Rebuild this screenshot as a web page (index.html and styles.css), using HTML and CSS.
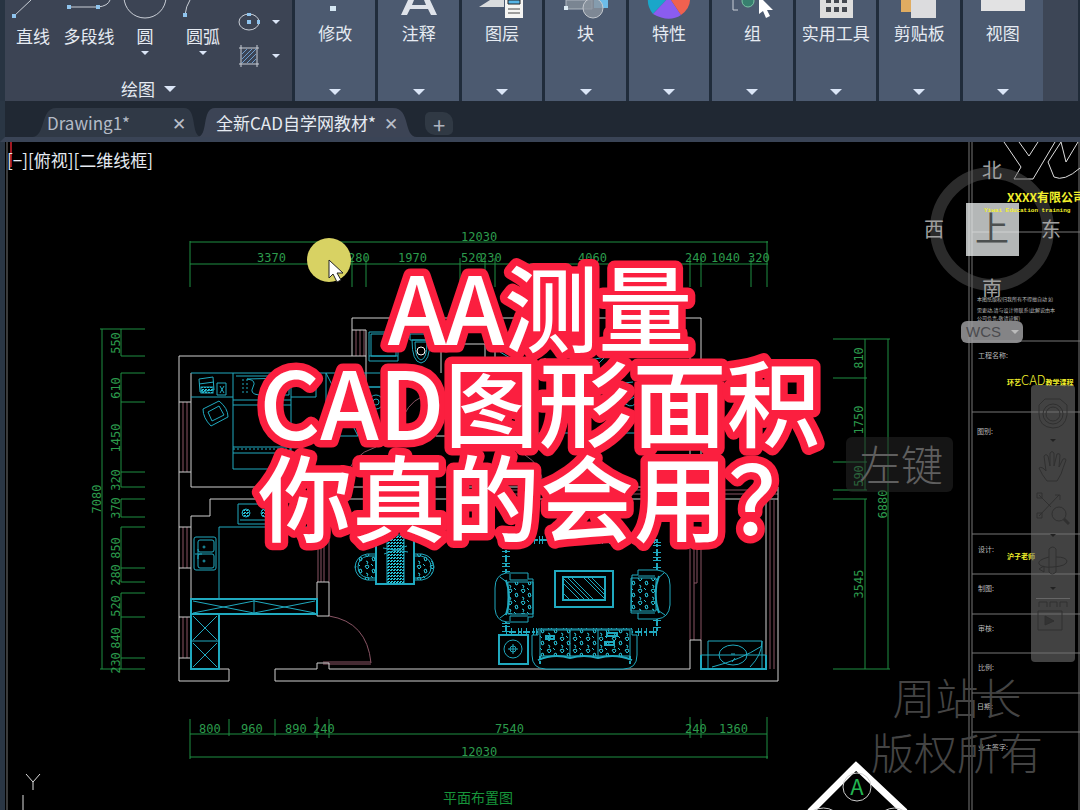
FILE: index.html
```html
<!DOCTYPE html>
<html lang="zh-CN">
<head>
  <meta charset="UTF-8">
  <meta name="viewport" content="width=device-width, initial-scale=1.0">
  <title>全新CAD自学网教材</title>
  <link rel="stylesheet" href="styles.css">
</head>
<body>
  <!-- Ribbon -->
  <header class="ribbon">
    <section class="draw-panel">
      <div class="draw-tools">
        <button class="tool">
          <svg width="48" height="24" viewBox="0 0 48 24"><path class="line" d="M5 16 22 0"/><path class="grip" d="M3 14h4v4H3z"/></svg>
          直线
        </button>
        <button class="tool">
          <svg width="48" height="24" viewBox="0 0 48 24"><path class="line" d="M4 7h29q10-1 12-7"/><path class="grip" d="M2 5h4v4H2zM31 5h4v4h-4z"/></svg>
          多段线
        </button>
        <button class="tool">
          <svg width="48" height="24" viewBox="0 0 48 24"><circle class="line" cx="24" cy="-3" r="21"/></svg>
          圆
          <i class="arrow small"></i>
        </button>
        <button class="tool arc">
          <svg width="48" height="24" viewBox="0 0 48 24"><path class="line" d="M6 15Q7 6 11 0"/><path class="grip" d="M4 13h4v4H4z"/></svg>
          圆弧
          <i class="arrow small"></i>
        </button>
        <div class="mini-tools">
          <button class="mini" aria-label="椭圆">
            <svg width="22" height="22" viewBox="0 0 22 22"><ellipse class="line" cx="11" cy="11" rx="10" ry="8"/><path class="grip" d="M9 2h4v3H9zM9 9h4v4H9zM19 9h3v4h-3z"/></svg>
            <i class="arrow small"></i>
          </button>
          <button class="mini" aria-label="图案填充">
            <svg width="22" height="22" viewBox="0 0 22 22"><path class="line" d="M3 0v22M19 0v22M1 3h20M1 19h20"/><path class="hatch" d="M4 9 9 4M4 14 14 4M4 18 18 4M9 18l9-9M14 18l4-4"/></svg>
            <i class="arrow small"></i>
          </button>
        </div>
      </div>
      <button class="panel-title">绘图 <i class="arrow"></i></button>
    </section>

    <button class="panel">
      <svg width="48" height="21" viewBox="0 0 48 21"><path fill="#d4e6f2" d="M19 6h6v5h-6z"/></svg>
      修改 <i class="arrow"></i>
    </button>
    <button class="panel">
      <svg width="48" height="21" viewBox="0 0 48 21"><path fill="#dfe3ea" d="M6 15 13 0h6l-2 5h14l-2-5h6l7 15h-6l-3-6H15l-3 6z"/></svg>
      注释 <i class="arrow"></i>
    </button>
    <button class="panel">
      <svg width="48" height="21" viewBox="0 0 48 21"><path fill="#d9dbdd" d="M1 7 12 0h14v7z"/><path fill="#f5f5f3" d="M27 0h18v18H27z"/><path fill="#56b5e6" stroke="#222" d="M30 0h12v4H30z"/><path stroke="#444" d="M30 9h12M30 13h12"/></svg>
      图层 <i class="arrow"></i>
    </button>
    <button class="panel">
      <svg width="48" height="21" viewBox="0 0 48 21"><path fill="#6dbce8" d="M32 0h14v8H32z"/><path fill="#7a8592" stroke="#aeb6bf" d="M4 0h26v9H4z"/><path fill="#dceaf3" d="M2 6h4v4H2z"/><circle cx="31" cy="8" r="10" fill="#8b949f" fill-opacity=".8" stroke="#c3c8ce"/></svg>
      块 <i class="arrow"></i>
    </button>
    <button class="panel">
      <svg width="48" height="21" viewBox="0 0 48 21"><path fill="#1aa6c9" d="M24-3 8 14A22 22 0 0 1 3-3z"/><path fill="#8b5cf0" d="m24-3-16 17q16 9 28 1z"/><path fill="#f0614f" d="m24-3 12 18Q46 8 45-3z"/></svg>
      特性 <i class="arrow"></i>
    </button>
    <button class="panel">
      <svg width="48" height="21" viewBox="0 0 48 21"><path class="line" d="M5 0v10h5"/><circle cx="20" cy="1" r="6" fill="#38806f" stroke="#7cc5a5"/><path fill="#fff" d="M31 0v14l4-3 3 7 4-2-3-6h6L35 0z"/></svg>
      组 <i class="arrow"></i>
    </button>
    <button class="panel">
      <svg width="48" height="21" viewBox="0 0 48 21"><path fill="#dededd" d="M8 0h33v18H8z"/><path fill="#45494f" d="M14 0h5v3h-5zM22 0h5v3h-5zM30 0h5v3h-5zM14 7h5v5h-5zM22 7h5v5h-5zM30 7h5v5h-5z"/></svg>
      实用工具 <i class="arrow"></i>
    </button>
    <button class="panel">
      <svg width="48" height="21" viewBox="0 0 48 21"><path fill="#e0ac61" d="M6 0h10v12H6z"/><path fill="#dcdcde" d="M16 0h25v18H16z"/></svg>
      剪贴板 <i class="arrow"></i>
    </button>
    <button class="panel">
      <svg width="48" height="21" viewBox="0 0 48 21"><path fill="#e2e2e3" d="M2 0h44v11H2z"/></svg>
      视图 <i class="arrow"></i>
    </button>
  </header>

  <!-- File tabs -->
  <nav class="tabs">
    <div class="tab">
      <svg class="tab-shape" viewBox="0 0 170 30" preserveAspectRatio="none"><path d="M0 30C14 30 8 0 24 0H152C166 0 158 30 170 30z"/></svg>
      <a href="#">Drawing1*</a>
      <button class="close" aria-label="关闭">✕</button>
    </div>
    <div class="tab active">
      <svg class="tab-shape" viewBox="0 0 220 30" preserveAspectRatio="none"><path d="M0 30C12 30 4 0 18 0H196C214 0 206 30 220 30z"/></svg>
      <a href="#">全新CAD自学网教材*</a>
      <button class="close" aria-label="关闭">✕</button>
    </div>
    <button class="add" aria-label="新建">+</button>
  </nav>

  <!-- Drawing area -->
  <main class="canvas">
    <svg class="drawing" viewBox="0 142 1080 668" preserveAspectRatio="xMidYMin slice">
      <defs>
        <pattern id="speckle" width="13" height="12" patternUnits="userSpaceOnUse">
          <path d="M1 2l3-1 1 2-2 2zM8 6l2-1 1 3-2 1zM7 0l2 2M2 9l2 1-1 2" fill="none" stroke="#27c3d8"/>
        </pattern>
        <pattern id="weave" width="3" height="3" patternUnits="userSpaceOnUse">
          <path d="M0 0h2v1H0zM1 2h2v1H1z" fill="#27c3d8"/>
        </pattern>
      </defs>

      <!-- Dimensions -->
      <g class="dim">
        <path d="M190 242H768M190 264H768M190 241V287M767 241V287M352 258V287M366 258V287M460 258V287M485 258V287M495 258V287M690 258V287M701 258V287M751 258V287"/>
        <path d="M190 734H767M190 757H768M190 719V759M767 717V759M229 719V736M275 719V736M317 717V738M329 719V738M690 717V738M701 719V738"/>
        <path d="M102 329V669M100 329H145M121 329V356H145M121 373V487H145M121 373H145M121 402H145M121 472H145M121 499V517H145M121 499H145M121 527V582H145M121 527H145M121 568H145M121 593V669M121 593H145M121 617H145M121 658H145M100 669H145"/>
        <path d="M888 339V669M865 339V490M865 499V669M833 339H890M833 378H867M833 462H867M833 490H867M833 499H867M833 669H890"/>
      </g>
      <g class="dim-text">
        <text x="461" y="241">12030</text>
        <text x="257" y="262">3370</text>
        <text x="348" y="262">280</text>
        <text x="398" y="262">1970</text>
        <text x="461" y="262">520</text>
        <text x="480" y="262">230</text>
        <text x="578" y="262">4060</text>
        <text x="685" y="262">240</text>
        <text x="711" y="262">1040</text>
        <text x="748" y="262">320</text>
        <text x="199" y="733">800</text>
        <text x="241" y="733">960</text>
        <text x="285" y="733">890</text>
        <text x="313" y="733">240</text>
        <text x="495" y="733">7540</text>
        <text x="685" y="733">240</text>
        <text x="719" y="733">1360</text>
        <text x="461" y="756">12030</text>
      </g>
      <g class="dim-text up">
        <text transform="translate(120 343) rotate(-90)">550</text>
        <text transform="translate(120 388) rotate(-90)">610</text>
        <text transform="translate(120 438) rotate(-90)">1450</text>
        <text transform="translate(120 480) rotate(-90)">320</text>
        <text transform="translate(120 508) rotate(-90)">370</text>
        <text transform="translate(120 548) rotate(-90)">850</text>
        <text transform="translate(120 575) rotate(-90)">280</text>
        <text transform="translate(120 606) rotate(-90)">520</text>
        <text transform="translate(120 638) rotate(-90)">840</text>
        <text transform="translate(120 663) rotate(-90)">230</text>
        <text transform="translate(101 499) rotate(-90)">7080</text>
        <text transform="translate(863 358) rotate(-90)">810</text>
        <text transform="translate(863 420) rotate(-90)">1750</text>
        <text transform="translate(863 476) rotate(-90)">590</text>
        <text transform="translate(863 584) rotate(-90)">3545</text>
        <text transform="translate(887 504) rotate(-90)">6880</text>
      </g>
      <text class="plan-title" x="443" y="803">平面布置图</text>

      <!-- Windows and doors -->
      <g class="opening">
        <path d="M183 402V472M187 402V472M183 527V568M187 527V568M183 617V658M187 617V658M356 330V356M360 330V356M364 330V356"/>
        <path d="M318 540V582M321 540V582M324 540V582M329 540V582M690 540V640M694 540V640M697 540V583H694M701 540V640M770 500V669M774 500V669"/>
        <path d="M329 616Q367 622 371 663M323 662H371M323 664H371M346 480Q350 455 376 447M404 415Q412 398 430 394M525 455Q542 465 543 486"/>
        <path d="M480 490H778M480 494H778"/>
      </g>

      <!-- Walls -->
      <g class="wall">
        <path d="M179 681V356H366M352 356V318H701V466M352 330H366V400M441 352V373M455 344H485V375M495 344V358M441 344H455M690 357V466M179 402H191M179 472H191V487H650M191 373V472"/>
        <path d="M179 527H191M179 568H191M179 617H191M179 658H191M191 669V516H210V499H778V681H275V669H317V663H329V669H690V640H701V669H766V499M778 487V499M179 681H229V669H191M317 582H329V616H317zM436 436H450M545 358V366M690 487V466"/>
      </g>

      <!-- Furniture -->
      <g class="furniture">
        <path d="M191 373H380M233 373V469H291V373M191 397H233M233 400H291M233 405H291M233 447H291M233 453H291M236 376H290M291 397H316V380M326 373V436H358V373M326 373L358 436M358 373L326 436"/>
        <path stroke-dasharray="2 2" d="M233 449H291M243 379V395M247 379V395"/>
        <path d="M199 379 213 377 214 390 200 392zM199 384 214 382M217 383H226V395H217zM220 386 224 393M224 386 220 393"/>
        <rect x="201" y="387" width="12" height="6" fill="url(#weave)"/>
        <path d="M203 409 219 401Q228 408 228 417L211 426Q203 418 203 409zM208 412 219 406 224 415 212 421z"/>
        <path d="M247 379q10 1 6 8t6 8h30v-17zM358 387H380"/>
        <circle cx="376" cy="402" r="7"/>
        <circle cx="376" cy="402" r="3"/>
        <path d="M369 332H398V361H369zM371 334H396V356H371zM369 356H398M366 387H400M410 334H432V340H410zM412 340Q412 362 421 363 430 362 430 340zM415 342Q415 359 421 360 427 359 427 342z"/>
        <circle class="drain" cx="421" cy="351" r="4"/>
        <path d="M500 352 510 358 520 352M590 360 605 357 598 364M615 384 633 382M622 401q8 8 13 3M622 405l12-8M500 433H690"/>

        <path d="M219 599V527H320M238 504H280V524H238zM240 520H280"/>
        <circle cx="246" cy="513" r="4" fill="url(#weave)"/>
        <circle cx="265" cy="513" r="4" fill="url(#weave)"/>
        <rect x="194" y="537" width="22" height="33" rx="2"/>
        <rect x="198" y="540" width="16" height="12" rx="2"/>
        <rect x="198" y="554" width="16" height="14" rx="2"/>
        <path d="M195 554H202M198 549V559"/>
        <circle cx="204" cy="547" r="1"/>
        <circle cx="204" cy="561" r="1"/>
        <path class="thick" d="M191 599H317V614H191zM191 614H219V669H191z"/>
        <path d="M193 601 254 613M193 613 254 601M254 601 315 613M254 613 315 601M254 599V614M191 641H219M193 616 217 640M217 616 193 640M193 643 217 667M217 643 193 667"/>

        <!-- dining set -->
        <path fill="url(#speckle)" d="M376 554H367Q356 556 355 567 356 578 367 580H376z"/>
        <path fill="url(#speckle)" d="M414 554H422Q433 556 434 567 433 578 422 580H414z"/>
        <path d="M376 556H368Q358 558 358 567 358 576 368 578H376M414 556H421Q431 558 431 567 431 576 421 578H414"/>
        <path class="thick" d="M376 535V584H414V535"/>
        <rect x="387" y="535" width="17" height="49" fill="url(#weave)"/>
        <path d="M383 548 408 552M384 554 407 546"/>

        <!-- carpet -->
        <path class="fringe" d="M506 632V540H657V632H506"/>
        <path class="fringe-core" d="M506 632V540H657V632H506"/>

        <!-- coffee table -->
        <path class="thick" d="M555 571H613V607H555zM563 577H605V600H563z"/>
        <path d="M563 583 580 600M563 578 585 600M567 577 590 600M571 577 594 600M583 577 605 599M587 577 605 595M591 577 605 591M563 593 570 600"/>

        <!-- armchairs and sofa -->
        <path class="solid" d="M528 573H506Q495 575 495 588V609Q496 621 507 622H528V617H533V579H528zM632 575H638V570H657Q670 571 670 585V605Q669 618 657 619H638V613H631z"/>
        <path fill="url(#speckle)" d="M508 582H533V614H508zM631 578H656V611H631z"/>
        <path class="thick" d="M506 580Q512 597 506 615M659 576Q652 594 659 613"/>
        <path d="M500 577 508 583M500 618 508 612M664 573 656 580M665 615 656 609M510 574V580H528M510 621V616H528M638 576H655M638 613H655"/>
        <path class="solid" d="M538 629H632V635H637V655Q637 669 623 669H546Q532 669 532 655V635H538z"/>
        <path fill="url(#speckle)" d="M540 630H630V656H540z"/>
        <path d="M570 630V658M598 630V658"/>
        <path class="thick" d="M538 660Q554 653 570 658 584 654 598 658 615 653 632 660M540 656V664M630 656V664M546 636h8v3h-8zM607 633h10v3h-10zM605 642h9v3h-9z"/>
        <path class="thick" d="M499 635H528V664H499z"/>
        <circle cx="513" cy="649" r="9"/>
        <circle cx="513" cy="649" r="3"/>
        <path d="M508 649H518M513 644V654"/>

        <!-- wash basin -->
        <path class="thick" d="M701 655V669H766V655"/>
        <path d="M701 655H766M708 668V641H762V668M712 667Q740 660 762 646M750 667Q762 655 762 641"/>
        <ellipse cx="733" cy="655" rx="14" ry="10"/>
        <path d="M731 654H735M732 662 735 658"/>
      </g>

      <!-- Title block -->
      <g class="frame">
        <path d="M969 142V810M972 142V810M972 232H1080M972 341H1080M972 412H1080M972 534H1080M972 574H1080M972 614H1080M972 653H1080M972 693H1080M972 732H1080M1079 142V810"/>
      </g>
      <path class="logo" d="M1004 142 1021 167 1014 179H1033L1055 142M1019 142 1029 156 1038 142M1061 142 1048 162 1054 177Q1064 182 1080 168M1061 142 1066 162 1078 142"/>
      <g class="title-text">
        <text x="978" y="358">工程名称:</text>
        <text x="977" y="434">图别:</text>
        <text x="978" y="552">设计:</text>
        <text x="978" y="591">制图:</text>
        <text x="978" y="631">审核:</text>
        <text x="978" y="670">比例:</text>
        <text x="977" y="709">日期:</text>
        <text x="978" y="750">业主签字:</text>
      </g>

      <!-- Elevation mark -->
      <path class="mark" d="M810 812 856 766 905 812"/>
      <circle class="mark-ring" cx="857" cy="787" r="14"/>
      <path class="mark-ring" d="M812 811q12-6 22 0M884 811q11-6 20 0"/>
      <text class="mark-text" x="857" y="795">A</text>

      <!-- Axis icon -->
      <path class="axis" d="M26 774 33 782 40 774M33 782V790M23 795V810"/>
      <path class="frame" d="M7 142V810"/>
      <path class="red-mark" d="M11 142V167"/>

      <!-- View cube -->
      <g class="cube">
        <circle cx="992" cy="229" r="56"/>
        <rect x="966" y="203" width="53" height="53"/>
        <path class="cube-lines" d="M969 203V256M972 203V256M972 232H1019"/>
        <text class="cube-top" x="992" y="241">上</text>
        <text x="992" y="178">北</text>
        <text x="992" y="296">南</text>
        <text x="934" y="237">西</text>
        <text x="1051" y="237">东</text>
      </g>
      <g class="title-text note">
        <text x="977" y="301">本图纸版权归我所有不得擅自动 如</text>
        <text x="977" y="312">需更动,请与设计师联系(此解说由本</text>
        <text x="977" y="320">公司负责,敬请谅解)</text>
      </g>
      <g class="yellow-text">
        <text x="1007" y="202" class="company">XXXX有限公司</text>
        <text x="984" y="212" class="company-en">Yiwai Education training</text>
        <text x="1007" y="385">环艺<tspan class="cad">CAD</tspan>教学课程</text>
        <text x="1007" y="559">沪子老师</text>
      </g>

      <!-- Watermark -->
      <g class="watermark">
        <text x="957" y="715">周站长</text>
        <text x="957" y="770">版权所有</text>
      </g>

      <!-- Cursor -->
      <circle cx="329" cy="260" r="22" fill="#d8d263"/>
      <path d="M329 260V278L333 274 337 282 341 280 337 273H343z" fill="#fff" stroke="#222"/>

      <!-- Caption -->
      <g class="caption">
        <text x="540" y="345">AA测量</text>
        <text x="540" y="440">CAD图形面积</text>
        <text x="540" y="535">你真的会用？</text>
      </g>
    </svg>

    <div class="view-label">
      <button>[−]</button><button>[俯视]</button><button>[二维线框]</button>
    </div>

    <button class="wcs">WCS <i></i></button>

    <div class="key-hint">左键</div>

    <div class="navbar">
      <button aria-label="导航控制盘">
        <svg width="32" height="34" viewBox="0 0 32 34"><path d="M8 2H23L30 8V18Q28 31 16 31 2 30 2 17V8z"/><circle cx="16" cy="17" r="10"/><circle cx="16" cy="17" r="7"/></svg>
      </button>
      <i class="dot"></i>
      <button aria-label="平移">
        <svg width="32" height="34" viewBox="0 0 32 34"><path d="M10 31Q5 25 2 18q3-2 7 3L7 6q2-3 4 0l2 10V3q2-3 4 0v13l3-12q3-1 3 1l-1 12 4-8q3-1 3 1-3 8-5 14l-4 7z"/></svg>
      </button>
      <button aria-label="缩放">
        <svg width="34" height="34" viewBox="0 0 34 34"><path d="M3 3 15 15M23 3 3 24M19 3h5v5M1 1h5v5H1zM1 21h5v5H1z"/><circle cx="23" cy="22" r="7"/><path stroke-width="3" d="M28 27l5 5"/></svg>
      </button>
      <i class="dot"></i>
      <button aria-label="动态观察">
        <svg width="32" height="34" viewBox="0 0 32 34"><path d="M12 4q4-4 7 0v23q-4 4-7 0zM12 12Q0 15 2 19q3 4 14 3 14-1 14-6-1-4-11-4M2 24l5-3v6z"/></svg>
      </button>
      <i class="dot"></i>
      <button class="split" aria-label="显示运动">
        <svg width="34" height="34" viewBox="0 0 34 34"><path d="M3 8V3h8v5M14 8V3h7v5M24 8V3h7v5M2 12h24v19H2z"/><path fill="#333" d="M9 17v9l9-4z"/></svg>
      </button>
    </div>
  </main>
</body>
</html>
```
FILE: styles.css
```css
* {
  box-sizing: border-box;
}

body {
  margin: 0;
  min-height: 100vh;
  display: flex;
  flex-direction: column;
  background-color: #202833;
  color: #e6ebf2;
  font-family: "Noto Sans CJK SC", "Noto Sans", sans-serif;
  font-size: 17px;
  line-height: 24px;
  overflow: hidden;
}

button {
  padding: 0;
  border: 0;
  background: none;
  color: inherit;
  font: inherit;
  cursor: pointer;
}

svg {
  display: block;
}

/* Ribbon */
.ribbon {
  display: flex;
  gap: 3px;
  height: 101px;
  padding-right: 35px;
  border-left: 5px solid #283442;
  border-right: 2px solid #202b38;
  background: linear-gradient(90deg, #202c3b 96%, #3d4656 96%);
}

.draw-panel {
  flex: 0 0 287px;
  display: flex;
  flex-direction: column;
  justify-content: space-between;
  background-color: #3c4454;
}

.draw-tools {
  display: flex;
}

.tool {
  flex: 0 0 56px;
  display: flex;
  flex-direction: column;
  align-items: center;
  white-space: nowrap;
}

.tool.arc {
  margin-left: 2px;
}

.mini-tools {
  display: flex;
  flex-direction: column;
  gap: 12px;
  margin-left: 7px;
  padding-top: 11px;
}

.mini {
  display: flex;
  align-items: center;
  gap: 12px;
}

.line {
  fill: none;
  stroke: #c9ced6;
}

.grip {
  fill: #8fc4ee;
}

.hatch {
  fill: none;
  stroke: #6e9ccb;
}

.panel-title {
  display: flex;
  align-items: center;
  justify-content: center;
  gap: 9px;
}

.arrow {
  border: 6px solid transparent;
  border-top-color: #dbe6f7;
  border-bottom: 0;
}

.arrow.small {
  border-width: 4px;
  border-bottom: 0;
}

.tool .arrow {
  margin-top: 3px;
}

.panel {
  flex: 1 1 0;
  display: flex;
  flex-direction: column;
  align-items: center;
  padding-bottom: 6px;
  background-color: #4c5a70;
  white-space: nowrap;
}

.panel .arrow {
  margin-top: auto;
}

/* File tabs */
.tabs {
  display: flex;
  align-items: flex-end;
  height: 41px;
  padding-left: 27px;
  border-left: 5px solid #2a3644;
  border-bottom: 5px solid #3a4456;
}

.tab {
  position: relative;
  display: flex;
  align-items: center;
  justify-content: space-between;
  width: 170px;
  height: 29px;
  padding: 0 16px 0 15px;
  color: #b4bbc6;
}

.tab.active {
  width: 220px;
  margin-left: -5px;
  padding: 0 19px;
  color: #e6ebf2;
}

.tab-shape {
  position: absolute;
  inset: 0;
  width: 100%;
  height: 100%;
  fill: #303946;
}

.active .tab-shape {
  fill: #3c4455;
}

.tab a {
  position: relative;
  color: inherit;
  text-decoration: none;
  white-space: nowrap;
}

.close {
  position: relative;
  color: #b9bec8;
}

.add {
  width: 28px;
  height: 23px;
  margin: 0 0 2px 8px;
  border-radius: 5px 10px 5px 10px;
  background-color: #303944;
  color: #aeb4be;
  font-size: 22px;
  line-height: 20px;
}

/* Drawing area */
.canvas {
  position: relative;
  flex: 1;
  overflow: hidden;
  border-left: 5px solid #2a3644;
  background-color: #000;
}

.drawing {
  position: absolute;
  top: 0;
  left: -5px;
  width: calc(100% + 5px);
  height: 100%;
}

.dim,
.opening,
.wall,
.furniture,
.frame,
.logo,
.axis {
  fill: none;
  stroke-width: 1;
}

.dim {
  stroke: #1f8f42;
}

.dim-text {
  fill: #2c9b4c;
  font-family: "DejaVu Sans Mono", monospace;
  font-size: 12px;
}

.up {
  text-anchor: middle;
}

.plan-title {
  fill: #17953a;
  font-size: 14px;
}

.opening {
  stroke: #8a5565;
}

.wall {
  stroke: #cfcfcf;
}

.furniture {
  stroke: #20a9bf;
}

.thick {
  stroke-width: 2;
}

.solid {
  fill: #000;
}

.drain {
  stroke: #fff;
}

.fringe {
  stroke-width: 8;
  stroke-dasharray: 1 4 1 2 1 6;
}

.fringe-core {
  stroke-width: 2;
  stroke-dasharray: 7 2 3 2;
}

.frame {
  stroke: #777;
}

.logo,
.axis {
  stroke: #ddd;
}

.red-mark {
  stroke: #a01822;
  stroke-width: 2;
}

.title-text {
  fill: #bbb;
  font-size: 7px;
}

.note {
  font-size: 5px;
}

.yellow-text {
  fill: #f2f02c;
  font-size: 7px;
  font-weight: bold;
}

.company {
  font-size: 12px;
}

.company-en {
  font-family: "Liberation Mono", monospace;
  font-size: 6px;
}

.cad {
  font-size: 13px;
  font-weight: 300;
}

.mark {
  fill: none;
  stroke: #fff;
  stroke-width: 7;
}

.mark-ring {
  fill: none;
  stroke: #ccc;
}

.mark-text {
  fill: #22b551;
  font-size: 22px;
  text-anchor: middle;
}

/* View cube */
.cube {
  fill: #a0a0a0;
  font-size: 20px;
  text-anchor: middle;
}

.cube circle {
  fill: none;
  stroke: #555;
  stroke-opacity: 0.5;
  stroke-width: 12;
}

.cube rect {
  fill: #b4b7b7;
}

.cube-lines {
  stroke: #cfd1d1;
}

.cube-top {
  fill: #4c5050;
  font-size: 34px;
}

.watermark {
  fill: #444;
  font-size: 43px;
  font-weight: 300;
  text-anchor: middle;
}

.caption {
  fill: #fff;
  stroke: #fb1f3f;
  stroke-width: 15px;
  stroke-linejoin: round;
  paint-order: stroke fill;
  font-size: 94px;
  font-weight: 500;
  text-anchor: middle;
}

.view-label {
  position: absolute;
  top: 6px;
  left: 2px;
  display: flex;
}

.wcs {
  position: absolute;
  top: 179px;
  right: 57px;
  display: flex;
  align-items: center;
  gap: 10px;
  width: 62px;
  height: 22px;
  padding-left: 5px;
  border-radius: 6px;
  background-color: rgba(155, 155, 158, 0.85);
  color: #4b4b4e;
  font-family: "Liberation Sans", sans-serif;
  font-size: 15px;
}

.wcs i {
  border: 4px solid transparent;
  border-top-color: #bbb;
  border-bottom: 0;
}

.key-hint {
  position: absolute;
  top: 295px;
  right: 127px;
  width: 107px;
  height: 55px;
  padding-right: 10px;
  border-radius: 6px;
  background-color: rgba(42, 42, 42, 0.5);
  color: #5f5f5f;
  font-size: 42px;
  font-weight: 300;
  line-height: 52px;
  text-align: right;
}

/* Navigation bar */
.navbar {
  position: absolute;
  top: 243px;
  right: 5px;
  display: flex;
  flex-direction: column;
  align-items: center;
  gap: 8px;
  width: 44px;
  height: 277px;
  padding-top: 12px;
  border-radius: 4px;
  background-color: rgba(110, 110, 110, 0.6);
}

.navbar svg {
  fill: none;
  stroke: #303030;
}

.navbar .dot {
  border: 3px solid transparent;
  border-top-color: #222;
  border-bottom: 0;
}

.navbar .split {
  border-top: 1px solid #666;
}
```
